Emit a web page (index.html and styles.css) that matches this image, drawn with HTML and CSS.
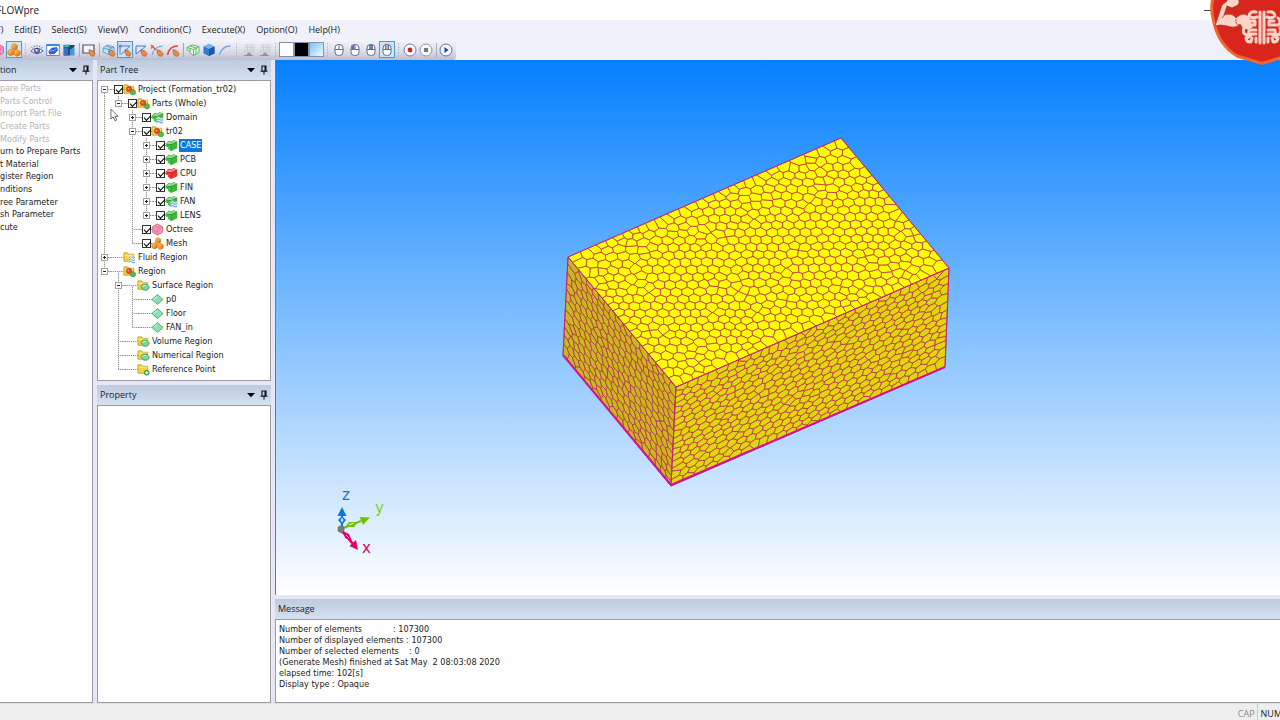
FILE: index.html
```html
<!DOCTYPE html>
<html lang="en">
<head>
<meta charset="utf-8">
<title>FLOWpre</title>
<link rel="stylesheet" href="styles.css">
</head>
<body>
<svg class="defs" aria-hidden="true">
  <defs>
    <linearGradient id="gold" x1="0" y1="0" x2="1" y2="1"><stop offset="0" stop-color="#ffe98a"/><stop offset=".5" stop-color="#f79a22"/><stop offset="1" stop-color="#d8560c"/></linearGradient>
    <symbol id="i-mesh" viewBox="0 0 14 14"><g fill="url(#gold)" stroke="#d06a18" stroke-width=".7"><path d="M5.500 1.500 8 .8l2.500 2-.6 3.200-3 .7-2.400-2z"/><path d="M1.200 7.500l3-1.500 2.800 2-.5 3.500-3.200 1.300L.8 11z"/><path d="M7.500 8l3-1.200 2.800 2-.5 3.300-3.200 1.200-2.500-2z"/></g></symbol>
    <symbol id="i-octree" viewBox="0 0 14 14"><path d="M7 1l5.500 3v6L7 13l-5.500-3V4z" fill="#f59ab4" stroke="#dc6e90"/><path d="M1.500 4L7 7l5.500-3M7 7v6M4 2.700l5.500 3v6M10 2.700l-5.500 3v6M1.500 7L7 10l5.500-3" fill="none" stroke="#e06cb0" stroke-width=".7"/><path d="M3.500 5.500h2M9 8.500h2" stroke="#ffd36a"/></symbol>
    <symbol id="i-folder" viewBox="0 0 14 14"><path d="M1 2h4l1 1.500h5.500V11H1z" fill="#f5d540" stroke="#b99420" stroke-width=".8"/><path d="M2 4.500h9" stroke="#fff09a"/></symbol>
    <symbol id="i-parts" viewBox="0 0 14 14"><use href="#i-folder"/><circle cx="6.500" cy="6.500" r="3" fill="#e8402c" stroke="#c44614" stroke-width=".6"/><circle cx="5.800" cy="6" r="1" fill="#ffaf8a"/><circle cx="10.800" cy="10" r="2.800" fill="#58bd48" stroke="#378830" stroke-width=".6"/></symbol>
    <symbol id="i-fluid" viewBox="0 0 14 14"><use href="#i-folder"/><path d="M6 7q2-1.500 3.500 0t3.500 0M6 9.500q2-1.500 3.500 0t3.500 0M6 12q2-1.500 3.500 0t3.500 0" fill="none" stroke="#fff" stroke-width="2"/><path d="M6 7q2-1.500 3.500 0t3.500 0M6 9.500q2-1.500 3.500 0t3.500 0M6 12q2-1.500 3.500 0t3.500 0" fill="none" stroke="#4c94dc"/></symbol>
    <symbol id="i-region" viewBox="0 0 14 14"><use href="#i-folder"/><path d="M4 8l2.500-2.500h4L13.500 9 11 12H7z" fill="#7fd39a" stroke="#328a52" stroke-width=".8"/><path d="M6 8l2-1h2" fill="none" stroke="#d9ffe4"/></symbol>
    <symbol id="i-point" viewBox="0 0 14 14"><use href="#i-folder"/><circle cx="10.500" cy="10.500" r="2.600" fill="#80d56d" stroke="#298735"/><path d="M10.500 9v3M9 10.500h3" stroke="#fff" stroke-width=".8"/></symbol>
    <symbol id="i-cube" viewBox="0 0 14 14"><path d="M.8 4.800L4 2l3 .7L9.500 1l3.700 2v7L6.500 13 3 10.500V8.500L.8 8z" fill="currentColor"/><path d="M6.500 5.500L13 3v7l-6.500 3z" fill="#000" opacity=".08"/><path d="M1.500 5l3-2L7 4l2.500-2 2.500 1L7 5.300z" fill="#fff" opacity=".5"/><path d="M6.500 5.500V13M3 8V5.700l3.500.2L13 3" fill="none" stroke="#000" opacity=".3" stroke-width=".7"/></symbol>
    <symbol id="i-cubeflow" viewBox="0 0 14 14"><use href="#i-cube"/><path d="M6 6.500q2-1.500 3.500 0t4 0v7H6z" fill="#dcefff"/><path d="M6 6.800q2-1.500 3.500 0t3.500 0M6 9.300q2-1.500 3.500 0t3.500 0M6 12q2-1.500 3.500 0t3.500 0" fill="none" stroke="#5396d4"/></symbol>
    <symbol id="i-diamond" viewBox="0 0 14 14"><path d="M7 1.700L13 7l-6 5.300L1 7z" fill="#8fdcae" stroke="#489a76" stroke-width=".9"/><path d="M3 7l4-3.500" stroke="#dbfff0"/></symbol>
    <symbol id="i-hand" viewBox="0 0 14 14"><path d="M7 6.500l2 1 1-.3 3.200 3.500-1.500 2.500-2.700-.3-1.800-2.700z" fill="#e98b42" stroke="#b85a20" stroke-width=".7"/></symbol>
    <symbol id="i-eye" viewBox="0 0 14 14"><path d="M.8 8Q7 2.500 13.200 8 7 13 .8 8z" fill="#eef0ff" stroke="#59618d" stroke-width=".9"/><circle cx="7" cy="7.800" r="2.500" fill="#6f8bd6" stroke="#303c75" stroke-width=".9"/><circle cx="6.500" cy="7" r=".9" fill="#fff"/><path d="M1.500 4l1.300 1.500M4 2.500l.8 1.700M7 2v1.800M10 2.500l-.8 1.700M12.500 4l-1.300 1.500" stroke="#59618d" stroke-width=".8"/></symbol>
    <symbol id="i-display" viewBox="0 0 14 14"><path d="M.7 1.500h12.600v11H.7z" fill="#fff" stroke="#4691dc"/><path d="M.7 1.500h12.600v1.500H.7z" fill="#3188dc"/><path d="M2.800 8.500l3-3.300 5-.6.700 2.600-3 3.300-4.800.6z" fill="#2f65dc" stroke="#153eaa" stroke-width=".7"/><path d="M4 8l4-.5L10.500 6" fill="none" stroke="#90bcff" stroke-width=".8"/></symbol>
    <symbol id="i-blocks" viewBox="0 0 14 14"><path d="M1.500 2h11v2l-4 3v5.500h-7z" fill="#244b8e"/><path d="M3 1.500h5L6.500 4H2z" fill="#39bdb5"/><path d="M8.500 6.500l4-2v8h-4z" fill="#3d97e4"/><path d="M2 4.500h4v8H2z" fill="#3472c7"/><path d="M8 2h4.500L9 5z" fill="#4a3150"/></symbol>
    <symbol id="i-pickbox" viewBox="0 0 14 14"><path d="M1 2h11v8H1z" fill="#f5f5fb" stroke="#505260" stroke-width="1.200"/><use href="#i-hand"/></symbol>
    <symbol id="i-pickcube" viewBox="0 0 14 14"><path d="M1 5l4-3 7 2v5l-5 2.500L1 9z" fill="#bfdef7" stroke="#4a93cb" stroke-width=".8"/><path d="M1 5l6 1.500L12 4M7 6.500v5M4 3l6 2" fill="none" stroke="#4a93cb" stroke-width=".8"/><use href="#i-hand"/></symbol>
    <symbol id="i-pickface" viewBox="0 0 14 14"><path d="M2 11.500V3h10L3 11.500" fill="#d6e7fb" stroke="#467fc8"/><path d="M.5 1.500l3 3m0-3l-3 3" stroke="#467fc8"/><use href="#i-hand"/></symbol>
    <symbol id="i-picktri" viewBox="0 0 14 14"><path d="M2 11V3h10z" fill="#dce8fb" stroke="#4a7ac6"/><use href="#i-hand"/></symbol>
    <symbol id="i-pickx" viewBox="0 0 14 14"><path d="M2 12Q4 3.500 12.500 3" fill="none" stroke="#5b9bd5"/><path d="M1 2l5 5M3.500 2.500l-2.500 3" stroke="#e6533a" stroke-width="1.200"/><use href="#i-hand"/></symbol>
    <symbol id="i-pickedge" viewBox="0 0 14 14"><path d="M1.500 12Q3 3 12 3" fill="none" stroke="#e34638" stroke-width="1.500"/><use href="#i-hand"/></symbol>
    <symbol id="i-wire" viewBox="0 0 14 14"><path d="M1 4.500l5-2.500 7 1.500v6L7.500 12.500 4 10V8L1 7.200zM1 4.500l6.500 2L13 3.500M7.500 6.500v6M4 3l6 2v6M4 8V5.500" fill="#e8f8e8" stroke="#57b45d" stroke-width=".9"/></symbol>
    <symbol id="i-solid" viewBox="0 0 14 14"><path d="M7 1l5.500 2.500v7L7 13l-5.500-2.500v-7z" fill="#2f7bd0"/><path d="M7 1l5.500 2.500L7 6 1.500 3.500z" fill="#77b5ec"/><path d="M7 6l5.500-2.500v7L7 13z" fill="#1c58ac"/></symbol>
    <symbol id="i-curve" viewBox="0 0 14 14"><path d="M1.500 12Q4 3 12.500 3" fill="none" stroke="#69ade0" stroke-width="1.300"/></symbol>
    <symbol id="i-grid" viewBox="0 0 14 14"><path d="M4 2h9v7H2M6.500 2v7M10 2v7M4 4.500h9M3 7h10" fill="none" stroke="#c9c9d0" stroke-width=".8"/><path d="M3 12.500h9M6 12l1.500-2h1l1.500 2" fill="#999" stroke="#888" stroke-width=".9"/></symbol>
    <symbol id="i-mouse" viewBox="0 0 14 14"><rect x="3" y="1.500" width="8" height="11" rx="3.500" fill="#fff" stroke="#55607c" stroke-width=".9"/><path d="M3 6.500h8M7 1.500v5" stroke="#55607c" stroke-width=".9"/></symbol>
    <symbol id="i-mousel" viewBox="0 0 14 14"><use href="#i-mouse"/><path d="M3.500 6V4Q4 2 6.500 2v4z" fill="#6a66bd"/></symbol>
    <symbol id="i-mousem" viewBox="0 0 14 14"><use href="#i-mouse"/><path d="M5.500 2h3v4h-3z" fill="#6a80c5" stroke="#55607c" stroke-width=".6"/></symbol>
    <symbol id="i-mouselr" viewBox="0 0 14 14"><use href="#i-mouse"/><path d="M5.500 1.700v4.800M8.500 1.700v4.800" stroke="#55607c" stroke-width=".9"/></symbol>
    <symbol id="i-record" viewBox="0 0 14 14"><circle cx="7" cy="7" r="6" fill="#fff" stroke="#747ca8"/><circle cx="7" cy="7" r="2.400" fill="#d02020"/></symbol>
    <symbol id="i-stop" viewBox="0 0 14 14"><circle cx="7" cy="7" r="6" fill="#f6f6f6" stroke="#96969c"/><path d="M5 5h4v4H5z" fill="#777"/></symbol>
    <symbol id="i-play" viewBox="0 0 14 14"><circle cx="7" cy="7" r="6" fill="#f2f6ff" stroke="#5f71aa"/><path d="M5.500 4l4 3-4 3z" fill="#2c3c9c"/></symbol>
    <symbol id="i-pin" viewBox="0 0 8 10"><path d="M2 1h4v5H2zM.5 6.200h7M4 6v3.500" fill="none" stroke="#111" stroke-width="1.100"/><path d="M4.500 1H6v5H4.500z" fill="#111"/></symbol>
    <symbol id="i-down" viewBox="0 0 8 10"><path d="M0 3h8L4 7.200z" fill="#000"/></symbol>
  </defs>
</svg>

<div class="app">
  <header class="titlebar"><h1>FLOWpre</h1><button class="minimize" aria-label="Minimize"></button></header>
  <nav class="menubar">
    <button class="cut">F)</button><button>Edit(E)</button><button>Select(S)</button><button>View(V)</button><button>Condition(C)</button><button>Execute(X)</button><button>Option(O)</button><button>Help(H)</button>
  </nav>
  <div class="toolbar"><div class="tools" id="tools"></div></div>

  <main class="workspace">
    <section class="panel navigation">
      <header class="caption"><h2>tion</h2><button aria-label="Panel menu"><svg><use href="#i-down"/></svg></button><button aria-label="Pin panel"><svg><use href="#i-pin"/></svg></button></header>
      <div class="sheet">
        <ul class="steps">
          <li class="off">pare Parts</li><li class="off">Parts Control</li><li class="off">Import Part File</li><li class="off">Create Parts</li><li class="off">Modify Parts</li>
          <li>urn to Prepare Parts</li><li>t Material</li><li>gister Region</li><li>nditions</li><li>ree Parameter</li><li>sh Parameter</li><li>cute</li>
        </ul>
      </div>
    </section>
    <div class="side">
      <section class="panel parttree">
        <header class="caption"><h2>Part Tree</h2><button aria-label="Panel menu"><svg><use href="#i-down"/></svg></button><button aria-label="Pin panel"><svg><use href="#i-pin"/></svg></button></header>
        <ul class="sheet tree" id="tree"></ul>
      </section>
      <section class="panel property">
        <header class="caption"><h2>Property</h2><button aria-label="Panel menu"><svg><use href="#i-down"/></svg></button><button aria-label="Pin panel"><svg><use href="#i-pin"/></svg></button></header>
        <div class="sheet"></div>
      </section>
    </div>
    <div class="stage">
      <section class="viewport">
        <svg class="scene" viewBox="276 60 1004 535" preserveAspectRatio="xMidYMid meet">
          <g id="mesh"></g>
          <g class="axes">
            <path d="M342 528V513" stroke="#0d78dc" stroke-width="2"/><path d="M342 507l-4.500 9h9zM342 516l4 4-4 5-4-5z" fill="#0d78dc"/><path d="M342 517.500l1.500 2.500-1.500 2.500-1.500-2.500z" fill="#c5e5fb"/>
            <path d="M341 529l20-8" stroke="#6cc400" stroke-width="2"/><path d="M370 517.500l-10.500-.5 3.500 8zM345 527l4-5 9 0-4 5z" fill="#6cc400"/><path d="M349 525l5-2" stroke="#d4f29c" stroke-width="1.300"/>
            <path d="M341 530l12 14" stroke="#e0006c" stroke-width="2.500"/><path d="M358 550l-2-10-6.500 6zM343 531l6 3 3 7-7-3z" fill="#e0006c"/><path d="M346 535l3 3" stroke="#ffa5cf"/>
            <path d="M338 527l3-1.500 3 1.500v4l-3 2-3-2z" fill="#777d84" stroke="#555" stroke-width=".5"/>
            <text x="342" y="500" fill="#0d78dc">z</text><text x="375" y="513" fill="#79d31d">y</text><text x="362" y="553" fill="#e0006c">x</text>
          </g>
        </svg>
      </section>
      <section class="panel message">
        <header class="caption"><h2>Message</h2></header>
        <pre class="sheet log">Number of elements            : 107300
Number of displayed elements : 107300
Number of selected elements    : 0
(Generate Mesh) finished at Sat May  2 08:03:08 2020
elapsed time: 102[s]
Display type : Opaque</pre>
      </section>
    </div>
  </main>
  <footer class="statusbar"><span class="cap">CAP</span><span class="num">NUM</span></footer>

  <svg class="badge" viewBox="0 0 70 66" aria-hidden="true">
    <path d="M3-2Q0 9 4 23q5 22 23 33l25 7.500L76 56V-2z" fill="#d9261c" stroke="#f0672e" stroke-width="3"/>
    <path d="M5 26L12 5 17 1 17-2h9q5 2 2 7l-6 3-5-2-3 9q8-3 12 3 8-8 14 0l3 10q-6 3-10 1l-3-5q-4 5-13 2-7-2-12 0z" fill="#fad4c7" stroke="#a93a2d" stroke-width=".8"/>
    <path d="M15 14l-3 4m14 1q-1 5 4 7m-13-20 3 3 6-2" fill="none" stroke="#a93a2d" stroke-width=".8"/>
    <g fill="none" stroke="#fad4c7" stroke-width="3" stroke-linecap="round" stroke-linejoin="round">
      <path d="M50 12V43M46 12q-6-1-7 4 3 3 8 1M36 18q-4 4 0 7h9v-4h-5M34 28q-2 5 2 7 3 0 3-5h7M46 34h-5q-2 4-5 4 0 4 5 4l1-4M46 38v4"/>
      <path d="M54 12V43M58 12q6-1 7 4-3 3-8 1M68 18q4 4 0 7h-9v-4h5M70 28q2 5-2 7-3 0-3-5h-7M58 34h5q2 4 5 4 0 4-5 4l-1-4M58 38v4"/>
    </g>
  </svg>
  <svg class="cursor" viewBox="0 0 10 15" aria-hidden="true"><path d="M1 1v11l2.600-2.400L5.500 14l2-1-1.900-4H9z" fill="#fff" stroke="#333" stroke-width=".8"/></svg>
</div>
<script src="app.js"></script>
</body>
</html>
```

FILE: styles.css
```css
* { box-sizing: border-box; }
body { margin: 0; font-family: "Open Sans", "Noto Sans", sans-serif; color: #222; background: #f0f0fa; }
button { border: 0; padding: 0; background: none; color: inherit; font: inherit; }
h1, h2, ul, pre { margin: 0; padding: 0; font-weight: 400; list-style: none; }
.defs { position: absolute; width: 0; height: 0; }

.app { position: relative; display: flex; flex-direction: column; height: 100vh; overflow: hidden; }
.titlebar { display: flex; justify-content: space-between; align-items: center; height: 20px; flex: none; padding-right: 67px; background: #fff; overflow: hidden; }
.titlebar h1 { margin-left: -4px; font-size: 10px; line-height: 20px; }
.minimize { width: 9px; height: 1px; background: #444; }
.menubar { display: flex; gap: 11px; height: 20px; flex: none; font-size: 9px; line-height: 20px; background: #f1f1fb; }
.menubar .cut { margin-left: -4px; }
.toolbar { height: 20px; flex: none; background: #f0f0fa; }
.tools { display: flex; align-items: center; width: max-content; height: 20px; margin-left: -10px; padding: 0 2px 1px 0; background: linear-gradient(#f3f3fa, #dedeea 55%, #bcbcd0); border-radius: 0 0 3px 0; }
.tool { display: flex; align-items: center; justify-content: center; flex: none; width: 16px; height: 17px; }
.tool svg { width: 14px; height: 14px; flex: none; }
.tool.on { background: #cbe4f6; border: 1px solid #519ac6; }
.grip { width: 7px; height: 14px; background: radial-gradient(circle, #9a9aaa 1px, transparent 1px) center / 3px 3px repeat-y; }
.sep { width: 4px; height: 14px; background: linear-gradient(#a9a9bb, #a9a9bb) center / 1px 100% no-repeat; }
.swatch { width: 15px; height: 15px; border: 1px solid #8494ad; }
.swatch.white { background: #fff; }
.swatch.black { background: #000; }
.swatch.sky { background: linear-gradient(135deg, #7cc0f8, #f4faff); }

.workspace { display: grid; grid-template-columns: 93px 174px minmax(0, 1fr); column-gap: 4px; flex: 1; min-height: 0; background: #e6e6f5; }
.panel { display: flex; flex-direction: column; min-height: 0; }
.caption { display: flex; align-items: center; gap: 5px; height: 20px; flex: none; padding: 0 3px; background: linear-gradient(#bccbdd, #d5e1f1); }
.caption h2 { flex: 1; font-size: 9px; line-height: 20px; }
.caption button { width: 8px; height: 10px; display: flex; }
.caption svg { width: 8px; height: 10px; }
.navigation .caption { padding-left: 0; }
.sheet { flex: 1; background: #fff; border: 1px solid #9c9ca8; font-family: "DejaVu Sans Condensed", "DejaVu Sans", sans-serif; font-size: 9px; }
.navigation .sheet { padding-top: 1px; border-left: 0; }
.steps { display: grid; grid-auto-rows: 1fr; height: 151px; white-space: nowrap; }
.steps li { display: flex; align-items: center; line-height: 12px; }
.steps .off { color: #b4b4b4; }
.side { display: flex; flex-direction: column; gap: 4px; min-height: 0; }
.parttree .sheet { flex: none; }
.property { flex: 1; }
.tree { padding: 1px 0 4px; overflow: hidden; }
.row { display: flex; align-items: center; height: 14px; margin-left: -1px; white-space: nowrap; }
.cell { display: flex; align-items: center; justify-content: center; flex: none; width: 14px; height: 14px; background-repeat: no-repeat; --d: repeating-linear-gradient(#999 0 1px, #ddd 1px 2px); --h: repeating-linear-gradient(90deg, #999 0 1px, #ddd 1px 2px); }
.cell.v { background-image: var(--d); background-size: 1px 14px; background-position: 7px 0; }
.cell.t { background-image: var(--d), var(--h); background-size: 1px 14px, 7px 1px; background-position: 7px 0, 7px 7px; }
.cell.l { background-image: var(--d), var(--h); background-size: 1px 7px, 7px 1px; background-position: 7px 0, 7px 7px; }
.cell.r { background-image: var(--h), var(--d); background-size: 7px 1px, 1px 7px; background-position: 7px 7px, 7px 7px; }
.cell.h { background-image: var(--h); background-size: 14px 1px; background-position: 0 7px; }
.cell.d { background-image: var(--h), var(--d); background-size: 14px 1px, 1px 7px; background-position: 0 7px, 7px 7px; }
.toggle { width: 7px; height: 7px; margin-left: 1px; border: 1px solid #a0a0a0; background: linear-gradient(#222, #222) center / 3px 1px no-repeat #fff; }
.toggle.plus { background: linear-gradient(#222, #222) center / 3px 1px no-repeat, linear-gradient(#222, #222) center / 1px 3px no-repeat, #fff; }
.check { appearance: none; display: grid; width: 9px; height: 9px; margin: 0 0 0 1px; border: 1px solid #333; background: #fff; }
.check:checked::before { content: ""; width: 6px; height: 3px; margin: 1px 0 0 1px; border: solid #000; border-width: 0 0 1px 1px; transform: rotate(-45deg); }
.row > svg { width: 13px; height: 13px; flex: none; margin: 0 1px 0 -2px; }
.name { padding: 0 1px; line-height: 13px; }
.selected .name { color: #fff; background: #0f78d7; }
.green { color: #43c843; }
.red { color: #f23a38; }

.stage { display: flex; flex-direction: column; gap: 4px; min-width: 0; }
.viewport { flex: 1; min-height: 0; border-left: 1px solid #777; background: linear-gradient(#0580ff, #fff); }
.scene { display: block; width: 100%; height: 100%; }
.axes path { stroke-linejoin: round; }
.axes text { font: 15px "DejaVu Sans", sans-serif; }
.face { stroke: #d0189c; stroke-width: 1; stroke-linejoin: round; }
.cells { fill: none; stroke: #b82a58; stroke-width: 0.6; stroke-linejoin: round; }
.rim { fill: none; stroke: #cf149c; stroke-width: 2; }
.message { height: 104px; flex: none; }
.log { padding: 4px 3px 0; line-height: 11px; white-space: pre; border-right: 0; overflow: hidden; }
.statusbar { display: flex; justify-content: flex-end; gap: 3px; height: 17px; flex: none; font-size: 9px; line-height: 20px; background: #eeeeee; overflow: hidden; border-top: 1px solid #e0e0e8; }
.cap { color: #888; padding-right: 2px; border-right: 1px solid #ccc; }
.num { margin-right: -2px; }
.badge { position: absolute; top: 0; right: 0; width: 70px; height: 66px; }
.cursor { position: absolute; left: 110px; top: 108px; width: 9px; height: 14px; }
```

FILE: app.js
```js
const icon = (id, cls = "") => `<svg class="${cls}"><use href="#i-${id}"/></svg>`;

const tools = [
  "octree", "*mesh", "|", "eye", "display", "blocks", "/", "pickbox", "/", "pickcube", "*pickface", "picktri",
  "pickx", "pickedge", "/", "wire", "solid", "curve", "|", "grid", "grid", "|", "#white", "#black", "#sky", "|",
  "mouse", "mousel", "mousem", "*mouselr", "|", "record", "stop", "/", "play"
];
document.getElementById("tools").innerHTML = tools.map(t => {
  if (t === "|") return '<span class="grip"></span>';
  if (t === "/") return '<span class="sep"></span>';
  if (t[0] === "#") return `<button class="swatch ${t.slice(1)}" aria-label="${t.slice(1)} background"></button>`;
  const on = t[0] === "*", id = on ? t.slice(1) : t;
  return `<button class="tool${on ? " on" : ""}" aria-label="${id}">${icon(id)}</button>`;
}).join("");

// guides (one letter per 14px cell), toggle, checkbox, icon, tint, label
const rows = [
  ["r", "-", 1, "parts", "", "Project (Formation_tr02)"],
  ["vl", "-", 1, "parts", "", "Parts (Whole)"],
  ["v.t", "+", 1, "cubeflow", "green", "Domain"],
  ["v.t", "-", 1, "parts", "", "tr02"],
  ["v.vt", "+", 1, "cube", "green", "CASE"],
  ["v.vt", "+", 1, "cube", "green", "PCB"],
  ["v.vt", "+", 1, "cube", "red", "CPU"],
  ["v.vt", "+", 1, "cube", "green", "FIN"],
  ["v.vt", "+", 1, "cubeflow", "green", "FAN"],
  ["v.vl", "+", 1, "cube", "green", "LENS"],
  ["v.t", "", 1, "octree", "", "Octree"],
  ["v.l", "", 1, "mesh", "", "Mesh"],
  ["t", "+", 0, "fluid", "", "Fluid Region"],
  ["l", "-", 0, "parts", "", "Region", "d"],
  [".t", "-", 0, "region", "", "Surface Region", "d"],
  [".vt", "", 0, "diamond", "", "p0"],
  [".vt", "", 0, "diamond", "", "Floor"],
  [".vl", "", 0, "diamond", "", "FAN_in"],
  [".t", "", 0, "region", "", "Volume Region"],
  [".t", "", 0, "region", "", "Numerical Region"],
  [".l", "", 0, "point", "", "Reference Point"]
];
document.getElementById("tree").innerHTML = rows.map(([guides, toggle, check, ic, tint, label, link], i) => {
  const cells = [...guides].map((g, n) => {
    const last = n === guides.length - 1;
    const box = last && toggle ? `<button class="toggle${toggle === "+" ? " plus" : ""}" aria-label="Toggle ${label}"></button>` : "";
    return `<span class="cell ${g === "." ? "" : g}">${box}</span>`;
  }).join("");
  const mid = check
    ? `<span class="cell h"><input class="check" type="checkbox" id="part${i}" checked></span>`
    : `<span class="cell ${link || "h"}"></span>`;
  const name = check ? `<label class="name" for="part${i}">${label}</label>` : `<span class="name">${label}</span>`;
  return `<li class="row${label === "CASE" ? " selected" : ""}">${cells}${mid}${icon(ic, tint)}${name}</li>`;
}).join("");

// Polyhedral surface mesh: relaxed Voronoi cells of a jittered hexagonal lattice on each face.
let seed = 7;
const rand = () => (seed = (seed * 16807) % 2147483647) / 2147483647;

function clip(poly, mx, my, nx, ny) {
  const out = [], side = p => (p[0] - mx) * nx + (p[1] - my) * ny;
  poly.forEach((a, i) => {
    const b = poly[(i + 1) % poly.length], sa = side(a), sb = side(b);
    if (sa <= 0) out.push(a);
    if (sa * sb < 0) { const t = sa / (sa - sb); out.push([a[0] + t * (b[0] - a[0]), a[1] + t * (b[1] - a[1])]); }
  });
  return out;
}

function voronoi(pts, w, h) {
  return pts.map(p => {
    let cell = [[0, 0], [w, 0], [w, h], [0, h]];
    for (const q of pts) {
      const dx = q[0] - p[0], dy = q[1] - p[1];
      if (q !== p && dx * dx + dy * dy < 8) cell = clip(cell, (p[0] + q[0]) / 2, (p[1] + q[1]) / 2, dx, dy);
    }
    return cell;
  }).filter(cell => cell.length > 2);
}

const centre = cell => [0, 1].map(k => cell.reduce((sum, p) => sum + p[k], 0) / cell.length);

function face(quad, w, h, angle, fill) {
  const [p0, p1, p2, p3] = quad, c = Math.cos(angle), s = Math.sin(angle), pts = [];
  for (let r = -45; r < 45; r++) for (let q = -45; q < 45; q++) {
    const a = q + (r & 1) / 2 + (rand() - .5) * .7, b = r * .866 + (rand() - .5) * .7;
    const x = a * c - b * s, y = a * s + b * c;
    if (x > 0 && y > 0 && x < w && y < h) pts.push([x, y]);
  }
  const project = ([x, y]) => {
    const u = x / w, v = y / h;
    return [0, 1].map(k => ((1 - u) * (1 - v) * p0[k] + u * (1 - v) * p1[k] + u * v * p2[k] + (1 - u) * v * p3[k]).toFixed(1)).join(" ");
  };
  let cells = voronoi(pts, w, h);
  for (let n = 0; n < 2; n++) cells = voronoi(cells.map(centre), w, h);
  const d = cells.map(cell => "M" + cell.map(project).join("L") + "Z").join("");
  return `<path class="face" fill="${fill}" d="M${quad.map(p => p.join(" ")).join("L")}Z"/><path class="cells" d="${d}"/>`;
}

document.getElementById("mesh").innerHTML =
  face([[568, 257], [676, 387], [671, 486], [563, 355]], 17, 13, 0.5, "#c9b81c") +
  face([[676, 387], [949, 268], [945, 367], [671, 486]], 28, 15, 0.25, "#e0d60c") +
  face([[568, 257], [841, 138], [949, 268], [676, 387]], 29, 18, 0.5, "#ffff00") +
  '<path class="rim" d="M563 355L671 485L945 367"/>';
```
